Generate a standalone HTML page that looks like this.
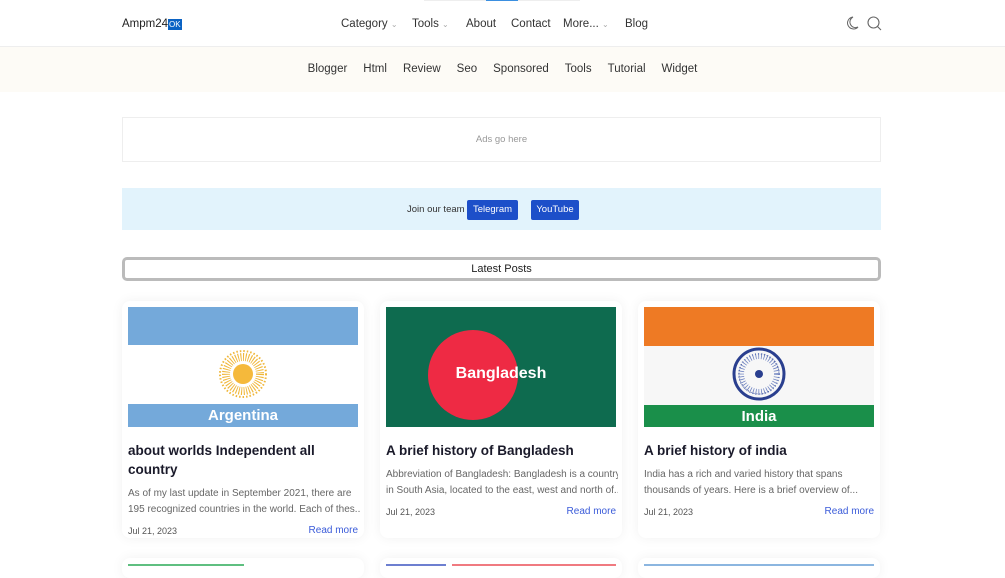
<!DOCTYPE html>
<html><head><style>
*{margin:0;padding:0;box-sizing:border-box}
body{width:1005px;height:565px;overflow:hidden;background:#fff;font-family:"Liberation Sans",sans-serif;color:#222;position:relative}
.a{position:absolute}
.hdr{top:0;left:0;width:1005px;height:47px;border-bottom:1px solid #eee;background:#fff}
.nav{font-size:11.5px;color:#333;top:18px}
.sub{top:47px;left:0;width:1005px;height:45px;background:#fdfbf6}
.card{background:#fff;border-radius:8px;box-shadow:0 0 12px rgba(0,0,0,.06);width:242px}
.img{position:absolute;left:6px;top:6px;width:230px;height:120px;overflow:hidden}
.t{position:absolute;left:6px;font-size:13.5px;font-weight:bold;color:#1a1a2a;line-height:19px;width:232px}
.d{position:absolute;left:6px;font-size:10px;color:#666;line-height:16px;width:232px}
.d div{white-space:nowrap;overflow:hidden}
.dt{position:absolute;left:6px;font-size:9px;color:#555}
.rm{position:absolute;right:6px;font-size:10px;color:#3a5bd9}
</style></head><body>
<div class="a hdr"></div>
<div class="a" style="left:424px;top:0;width:156px;height:1px;background:#eee"></div>
<div class="a" style="left:486px;top:0;width:32px;height:1px;background:#3b8fe0"></div>
<div class="a" style="left:122px;top:18px;font-size:11.5px;color:#222">Ampm24<span style="background:#0b63c4;color:#fff;font-size:8px;padding:1px 1px">OK</span></div>
<div class="a nav" style="left:341px">Category <span style="color:#aaa;font-size:8px">&#8964;</span></div>
<div class="a nav" style="left:412px">Tools <span style="color:#aaa;font-size:8px">&#8964;</span></div>
<div class="a nav" style="left:466px">About</div>
<div class="a nav" style="left:511px">Contact</div>
<div class="a nav" style="left:563px">More... <span style="color:#aaa;font-size:8px">&#8964;</span></div>
<div class="a nav" style="left:625px">Blog</div>
<svg class="a" style="left:845px;top:16px" width="14" height="15" viewBox="0 0 14 15"><path d="M8 1A6 6 0 1 0 13 11A5 5 0 0 1 8 1Z" fill="none" stroke="#666" stroke-width="1"/></svg>
<svg class="a" style="left:867px;top:16px" width="15" height="15" viewBox="0 0 15 15"><circle cx="6.5" cy="6.5" r="5.5" fill="none" stroke="#666" stroke-width="1.1"/><path d="M10.5 10.5L14 14" stroke="#666" stroke-width="1.1"/></svg>
<div class="a sub"></div>
<div class="a" style="top:63px;left:0;width:1005px;text-align:center;font-size:11.5px;color:#333">
<span style="margin:0 8px">Blogger</span><span style="margin:0 8px">Html</span><span style="margin:0 8px">Review</span><span style="margin:0 8px">Seo</span><span style="margin:0 8px">Sponsored</span><span style="margin:0 8px">Tools</span><span style="margin:0 8px">Tutorial</span><span style="margin:0 8px">Widget</span></div>
<div class="a" style="left:122px;top:117px;width:759px;height:45px;border:1px solid #eee;text-align:center;line-height:43px;font-size:9.5px;color:#999">Ads go here</div>
<div class="a" style="left:122px;top:188px;width:759px;height:42px;background:#e2f3fc"></div>
<div class="a" style="left:407px;top:204px;font-size:9.5px;color:#333">Join our team</div>
<div class="a" style="left:467px;top:200px;width:51px;height:20px;background:#1d4fc9;color:#fff;font-size:9.5px;text-align:center;line-height:20px;border-radius:2px">Telegram</div>
<div class="a" style="left:531px;top:200px;width:48px;height:20px;background:#1d4fc9;color:#fff;font-size:9.5px;text-align:center;line-height:20px;border-radius:2px">YouTube</div>
<div class="a" style="left:122px;top:257px;width:759px;height:24px;border:3px solid #bbb;border-radius:5px;text-align:center;line-height:19px;font-size:11px;color:#222">Latest Posts</div>

<div class="a card" style="left:122px;top:301px;height:237px">
<div class="img" style="background:#fff"><div style="height:38px;background:#74a9da"></div><div style="position:absolute;bottom:0;width:100%;height:23px;background:#74a9da;color:#fff;font-weight:bold;font-size:15px;text-align:center;line-height:23px">Argentina</div>
<svg style="position:absolute;left:91px;top:43px" width="48" height="48" viewBox="0 0 48 48"><circle cx="24" cy="24" r="23" fill="none" stroke="#f0b73a" stroke-width="2" stroke-dasharray="1.5 2"/><circle cx="24" cy="24" r="17" fill="none" stroke="#f0b73a" stroke-width="8" stroke-dasharray="1 1.5"/><circle cx="24" cy="24" r="10" fill="#f5b93b"/></svg></div>
<div class="t" style="top:140px">about worlds Independent all country</div>
<div class="d" style="top:185px"><div>As of my last update in September 2021, there are</div><div>195 recognized countries in the world. Each of thes...</div></div>
<div class="dt" style="top:225px">Jul 21, 2023</div><div class="rm" style="top:224px">Read more</div>
</div>

<div class="a card" style="left:380px;top:301px;height:237px">
<div class="img" style="background:#0e6b4f"><div style="position:absolute;left:42px;top:23px;width:90px;height:90px;border-radius:50%;background:#ee2a44"></div><div style="position:absolute;width:100%;top:58px;text-align:center;color:#fff;font-weight:bold;font-size:16px">Bangladesh</div></div>
<div class="t" style="top:140px">A brief history of Bangladesh</div>
<div class="d" style="top:166px"><div>Abbreviation of Bangladesh: Bangladesh is a country</div><div>in South Asia, located to the east, west and north of...</div></div>
<div class="dt" style="top:206px">Jul 21, 2023</div><div class="rm" style="top:205px">Read more</div>
</div>

<div class="a card" style="left:638px;top:301px;height:237px">
<div class="img" style="background:#f7f7f7"><div style="height:39px;background:#ee7a24"></div><div style="position:absolute;bottom:0;width:100%;height:22px;background:#1a8f4a;color:#fff;font-weight:bold;font-size:15px;text-align:center;line-height:24px">India</div>
<svg style="position:absolute;left:88px;top:40px" width="54" height="54" viewBox="0 0 54 54"><circle cx="27" cy="27" r="25" fill="none" stroke="#2a3f8f" stroke-width="3"/><circle cx="27" cy="27" r="20" fill="none" stroke="#2a3f8f" stroke-width="1" stroke-dasharray="1 2"/><circle cx="27" cy="27" r="18" fill="none" stroke="#6a7fbf" stroke-width="6" stroke-dasharray="0.8 2"/><circle cx="27" cy="27" r="4" fill="#2a3f8f"/></svg></div>
<div class="t" style="top:140px">A brief history of india</div>
<div class="d" style="top:166px"><div>India has a rich and varied history that spans</div><div>thousands of years. Here is a brief overview of...</div></div>
<div class="dt" style="top:206px">Jul 21, 2023</div><div class="rm" style="top:205px">Read more</div>
</div>

<div class="a card" style="left:122px;top:558px;height:20px"><div style="position:absolute;left:6px;top:6px;width:116px;height:2px;background:#5fbf80"></div></div>
<div class="a card" style="left:380px;top:558px;height:20px"><div style="position:absolute;left:6px;top:6px;width:60px;height:2px;background:#6d7fd0"></div><div style="position:absolute;left:72px;top:6px;width:164px;height:2px;background:#f07a80"></div></div>
<div class="a card" style="left:638px;top:558px;height:20px"><div style="position:absolute;left:6px;top:6px;width:230px;height:2px;background:#8cb6e0"></div></div>
</body></html>
